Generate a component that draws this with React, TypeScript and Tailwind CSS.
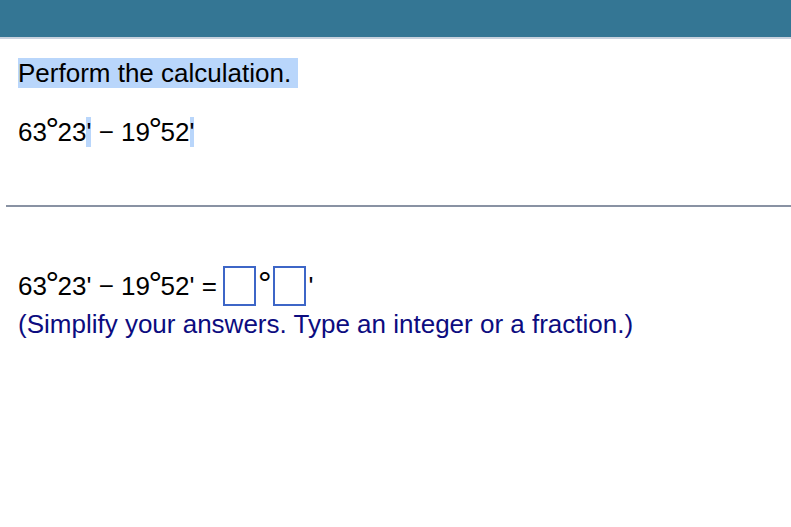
import React from "react";

function Box() {
  return <span className="inline-block w-[33px] h-[40px] border-2 border-[#3d66c7] bg-white" />;
}

function Deg() {
  return <span className="text-[34px] leading-[0px] mx-[-1.5px]">°</span>;
}

export default function App() {
  return (
    <div className="w-[791px] h-[527px] bg-white text-[26px] text-black font-['Liberation_Sans',Arial,sans-serif] overflow-hidden">
      <div className="h-[37px] bg-[#347694]" />
      <div className="h-[2px] bg-[#c9d2de]" />
      <div className="pl-[18px] pt-[19px]">
        <p className="leading-[31px]">
          <span className="bg-[#b9d6fb]">Perform the calculation.&nbsp;</span>
        </p>
        <p className="mt-[28px] h-[31px] leading-[31px] whitespace-pre">
          63<Deg />23<span className="bg-[#b9d6fb]">'</span> − 19<Deg />52<span className="bg-[#b9d6fb]">'</span>
        </p>
      </div>
      <div className="ml-[6px] mt-[57px] h-[2px] bg-[#8992a3]" />
      <div className="pl-[18px] pt-[59px]">
        <div className="flex items-center h-[40px]">
          <span className="h-[31px] leading-[31px] whitespace-pre">
            63<Deg />23' − 19<Deg />52' =
          </span>
          <span className="ml-[6px] flex"><Box /></span>
          <span className="h-[31px] leading-[31px] mx-[3.5px]">
            <Deg />
          </span>
          <Box />
          <span className="h-[31px] leading-[31px] ml-[2px]">'</span>
        </div>
        <p className="mt-[3px] leading-[31px] text-[#0c0c80]">
          (Simplify your answers. Type an integer or a fraction.)
        </p>
      </div>
    </div>
  );
}
